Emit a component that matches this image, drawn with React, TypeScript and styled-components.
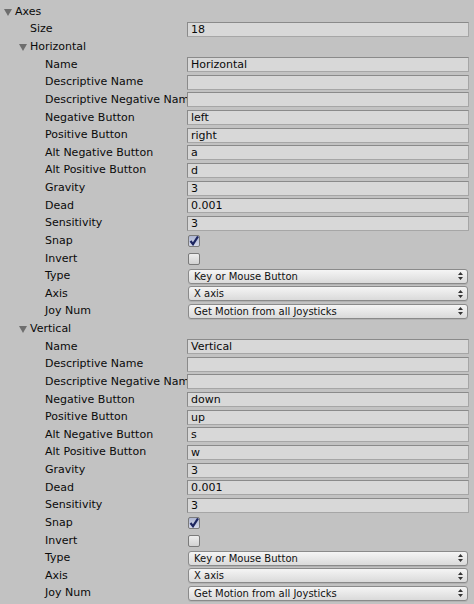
import React from "react";
import styled, { createGlobalStyle } from "styled-components";

const GlobalStyle = createGlobalStyle`
  html, body {
    margin: 0;
    padding: 0;
    background: #c2c2c2;
  }
  body {
    font-family: "DejaVu Sans", Verdana, sans-serif;
    font-size: 11px;
    color: #0a0a0a;
  }
`;

const Inspector = styled.div`
  padding: 3px 5px 0 0;
  display: flex;
  flex-direction: column;
`;

const Row = styled.div`
  height: 17.64px;
  display: flex;
  align-items: center;
`;

const Label = styled.div<{ $depth: number }>`
  width: 187px;
  flex: none;
  box-sizing: border-box;
  padding-left: ${(p) => 15 + p.$depth * 15}px;
  white-space: nowrap;
  overflow: hidden;
  position: relative;
  line-height: 14px;
`;

const Foldout = styled.span`
  position: absolute;
  left: -11px;
  top: 4px;
  width: 0;
  height: 0;
  border-left: 4px solid transparent;
  border-right: 4px solid transparent;
  border-top: 7px solid #6e6e6e;
`;

const FoldLabel = styled.span`
  position: relative;
`;

const TextField = styled.div`
  flex: 1;
  height: 15px;
  box-sizing: border-box;
  background: #d8d8d8;
  border: 1px solid #8a8a8a;
  border-bottom-color: #a6a6a6;
  border-right-color: #a6a6a6;
  padding: 0 3px;
  line-height: 13px;
  white-space: nowrap;
  overflow: hidden;
`;

const Check = styled.div<{ $on?: boolean }>`
  width: 12px;
  height: 12px;
  margin-left: 1px;
  box-sizing: border-box;
  border: 1px solid #7a7a7a;
  border-radius: 2px;
  background: ${(p) =>
    p.$on
      ? "linear-gradient(#aeb6d2, #d4d8e8)"
      : "linear-gradient(#ededed, #d2d2d2)"};
  display: flex;
  align-items: center;
  justify-content: center;
`;

const Popup = styled.div`
  flex: 1;
  height: 15px;
  margin: 0 1px;
  box-sizing: border-box;
  border: 1px solid #8a8a8a;
  border-radius: 3px;
  background: linear-gradient(#f5f5f5, #dadada);
  box-shadow: 0 1px 0 rgba(0, 0, 0, 0.08);
  display: flex;
  align-items: center;
  justify-content: space-between;
  padding: 0 4px 0 5px;
  font-size: 10px;
  color: #111;
`;

const Arrows = styled.svg`
  width: 5px;
  height: 8px;
`;

type Field =
  | { label: string; kind: "text"; value: string }
  | { label: string; kind: "check"; value: boolean }
  | { label: string; kind: "popup"; value: string };

const axisFields = (
  name: string,
  neg: string,
  pos: string,
  altNeg: string,
  altPos: string
): Field[] => [
  { label: "Name", kind: "text", value: name },
  { label: "Descriptive Name", kind: "text", value: "" },
  { label: "Descriptive Negative Name", kind: "text", value: "" },
  { label: "Negative Button", kind: "text", value: neg },
  { label: "Positive Button", kind: "text", value: pos },
  { label: "Alt Negative Button", kind: "text", value: altNeg },
  { label: "Alt Positive Button", kind: "text", value: altPos },
  { label: "Gravity", kind: "text", value: "3" },
  { label: "Dead", kind: "text", value: "0.001" },
  { label: "Sensitivity", kind: "text", value: "3" },
  { label: "Snap", kind: "check", value: true },
  { label: "Invert", kind: "check", value: false },
  { label: "Type", kind: "popup", value: "Key or Mouse Button" },
  { label: "Axis", kind: "popup", value: "X axis" },
  { label: "Joy Num", kind: "popup", value: "Get Motion from all Joysticks" },
];

const axes = [
  { title: "Horizontal", fields: axisFields("Horizontal", "left", "right", "a", "d") },
  { title: "Vertical", fields: axisFields("Vertical", "down", "up", "s", "w") },
];

const FieldControl = ({ field }: { field: Field }) => {
  if (field.kind === "check") {
    return (
      <Check $on={field.value}>
        {field.value && (
          <svg width="10" height="10" viewBox="0 0 10 10">
            <path d="M1.5 5 L4 8.2 L9 0.5" fill="none" stroke="#1c2560" strokeWidth="2.2" />
          </svg>
        )}
      </Check>
    );
  }
  if (field.kind === "popup") {
    return (
      <Popup>
        <span>{field.value}</span>
        <Arrows viewBox="0 0 5 8">
          <path d="M2.5 0 L5 3 L0 3 Z M2.5 8 L5 5 L0 5 Z" fill="#333" />
        </Arrows>
      </Popup>
    );
  }
  return <TextField>{field.value}</TextField>;
};

const FoldRow = ({ depth, title }: { depth: number; title: string }) => (
  <Row>
    <Label $depth={depth}>
      <FoldLabel>
        <Foldout />
        {title}
      </FoldLabel>
    </Label>
  </Row>
);

export default function App() {
  return (
    <>
      <GlobalStyle />
      <Inspector>
        <FoldRow depth={0} title="Axes" />
        <Row>
          <Label $depth={1}>Size</Label>
          <TextField>18</TextField>
        </Row>
        {axes.map((axis) => (
          <React.Fragment key={axis.title}>
            <FoldRow depth={1} title={axis.title} />
            {axis.fields.map((f) => (
              <Row key={f.label}>
                <Label $depth={2}>{f.label}</Label>
                <FieldControl field={f} />
              </Row>
            ))}
          </React.Fragment>
        ))}
      </Inspector>
    </>
  );
}
